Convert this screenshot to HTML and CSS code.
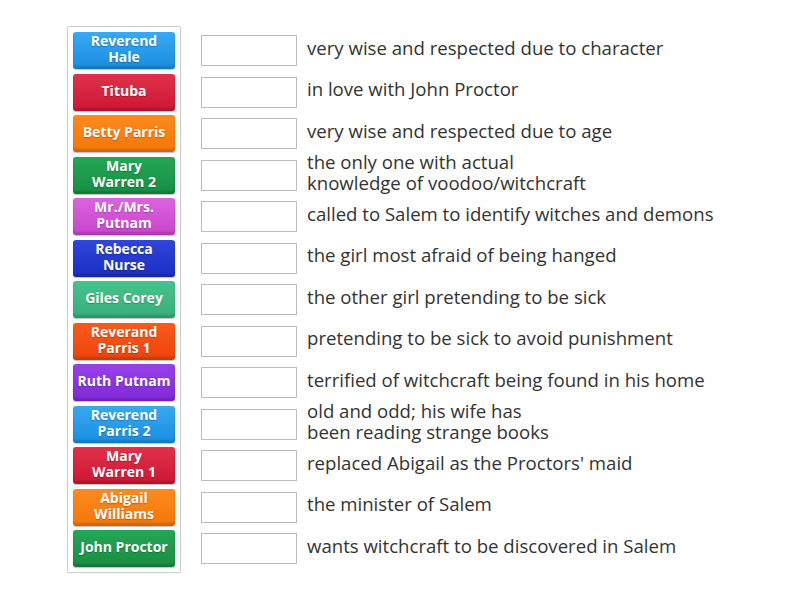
FILE: index.html
```html
<!DOCTYPE html>
<html>
<head>
<meta charset="utf-8">
<link rel="stylesheet" href="styles.css">
</head>
<body>
<div class="game">
  <div class="bank">
    <div class="tile c-blue">Reverend<br>Hale</div>
    <div class="tile c-red">Tituba</div>
    <div class="tile c-orange">Betty Parris</div>
    <div class="tile c-green">Mary<br>Warren 2</div>
    <div class="tile c-magenta">Mr./Mrs.<br>Putnam</div>
    <div class="tile c-royal">Rebecca<br>Nurse</div>
    <div class="tile c-teal">Giles Corey</div>
    <div class="tile c-orangered">Reverand<br>Parris 1</div>
    <div class="tile c-purple">Ruth Putnam</div>
    <div class="tile c-blue">Reverend<br>Parris 2</div>
    <div class="tile c-red">Mary<br>Warren 1</div>
    <div class="tile c-orange">Abigail<br>Williams</div>
    <div class="tile c-green">John Proctor</div>
  </div>
  <div class="rows">
    <div class="row"><div class="box"></div><div class="clue">very wise and respected due to character</div></div>
    <div class="row"><div class="box"></div><div class="clue">in love with John Proctor</div></div>
    <div class="row"><div class="box"></div><div class="clue">very wise and respected due to age</div></div>
    <div class="row"><div class="box"></div><div class="clue">the only one with actual<br>knowledge of voodoo/witchcraft</div></div>
    <div class="row"><div class="box"></div><div class="clue">called to Salem to identify witches and demons</div></div>
    <div class="row"><div class="box"></div><div class="clue">the girl most afraid of being hanged</div></div>
    <div class="row"><div class="box"></div><div class="clue">the other girl pretending to be sick</div></div>
    <div class="row"><div class="box"></div><div class="clue">pretending to be sick to avoid punishment</div></div>
    <div class="row"><div class="box"></div><div class="clue">terrified of witchcraft being found in his home</div></div>
    <div class="row"><div class="box"></div><div class="clue">old and odd; his wife has<br>been reading strange books</div></div>
    <div class="row"><div class="box"></div><div class="clue">replaced Abigail as the Proctors' maid</div></div>
    <div class="row"><div class="box"></div><div class="clue">the minister of Salem</div></div>
    <div class="row"><div class="box"></div><div class="clue">wants witchcraft to be discovered in Salem</div></div>
  </div>
</div>
</body>
</html>
```
FILE: styles.css
```css
html, body {
  margin: 0;
  padding: 0;
  background: #ffffff;
  width: 800px;
  height: 600px;
  overflow: hidden;
}

.game {
  display: flex;
  align-items: flex-start;
  gap: 20px;
  padding: 26px 0 0 67px;
  font-family: "Open Sans", "DejaVu Sans", sans-serif;
}

.bank {
  width: 102px;
  padding: 5px;
  border: 1px solid #cfcfcf;
  border-radius: 2px;
  box-shadow: 0 0 2px rgba(0, 0, 0, 0.08);
  display: flex;
  flex-direction: column;
  gap: 4.5px;
  background: #fff;
}

.tile {
  height: 37px;
  box-sizing: border-box;
  border-radius: 3px;
  display: flex;
  align-items: center;
  justify-content: center;
  text-align: center;
  color: #ffffff;
  font-weight: 700;
  font-size: 14px;
  line-height: 16px;
  text-shadow: 0 1px 1px rgba(0, 0, 0, 0.25);
  box-shadow: inset 0 -3px 2px rgba(0, 0, 0, 0.15), 0 1px 1px rgba(0, 0, 0, 0.25);
  padding-bottom: 3px;
}

.c-blue { background: linear-gradient(#38a9f2, #1a8de2); }
.c-red { background: linear-gradient(#e2304a, #cc1733); }
.c-orange { background: linear-gradient(#fd8a1e, #f4760a); }
.c-green { background: linear-gradient(#25a656, #188d43); }
.c-magenta { background: linear-gradient(#dc63de, #c944cd); }
.c-royal { background: linear-gradient(#3045db, #1c2ec4); }
.c-teal { background: linear-gradient(#48c28d, #34b07a); }
.c-orangered { background: linear-gradient(#fb5a1c, #ee430b); }
.c-purple { background: linear-gradient(#9642e8, #8128d8); }

.rows {
  padding-top: 6px;
  display: flex;
  flex-direction: column;
  gap: 4.5px;
}

.row {
  height: 37px;
  display: flex;
  align-items: center;
}

.box {
  width: 96px;
  height: 31px;
  box-sizing: border-box;
  border: 1px solid #bdbdbd;
  background: #fff;
  flex: none;
}

.clue {
  margin-left: 10px;
  font-size: 18.6px;
  line-height: 21px;
  color: #333333;
  padding-bottom: 7px;
  white-space: nowrap;
}
```
